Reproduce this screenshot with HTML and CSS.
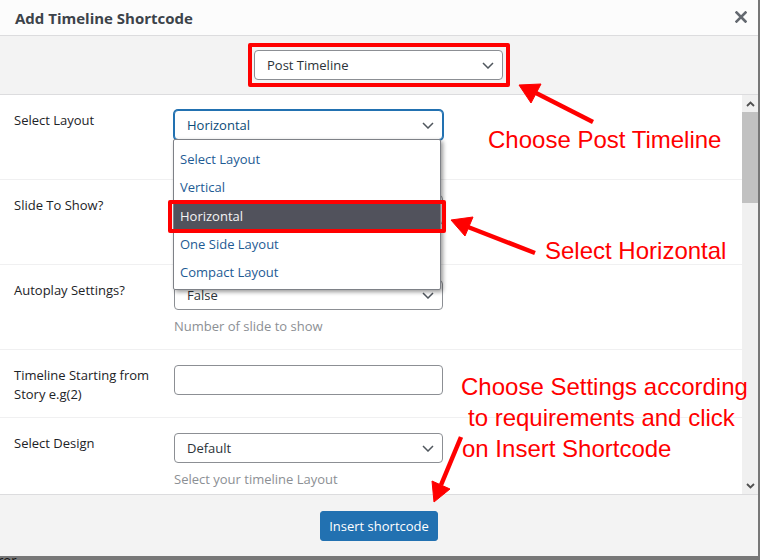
FILE: index.html
```html
<!DOCTYPE html>
<html>
  <head>
    <link rel="stylesheet" href="styles.css">
  </head>
  <body>
    <div class="modal">
      <div class="modal-head">
        <h1>Add Timeline Shortcode</h1>
        <svg class="close" width="12" height="12" viewBox="0 0 12 12">
          <path d="M1.5 1.5l9 9M10.5 1.5l-9 9" stroke="#646970" stroke-width="2.6" stroke-linecap="square"/>
        </svg>
      </div>

      <div class="type-bar">
        <div class="mark-box">
          <div class="select select-type">
            Post Timeline
            <svg class="chev" width="12" height="7" viewBox="0 0 12 7"><path d="M1 1l5 5 5-5" fill="none" stroke="#50575e" stroke-width="1.5"/></svg>
          </div>
        </div>
      </div>

      <div class="modal-body">
        <div class="fields">
          <div class="row">
            <label>Select Layout</label>
            <div class="field">
              <div class="select focus">
                Horizontal
                <svg class="chev" width="12" height="7" viewBox="0 0 12 7"><path d="M1 1l5 5 5-5" fill="none" stroke="#50575e" stroke-width="1.5"/></svg>
              </div>
              <p class="desc covered">Select your layout</p>
            </div>
          </div>
          <div class="row">
            <label>Slide To Show?</label>
            <div class="field">
              <div class="select">
                <span class="covered">3</span>
                <svg class="chev" width="12" height="7" viewBox="0 0 12 7"><path d="M1 1l5 5 5-5" fill="none" stroke="#50575e" stroke-width="1.5"/></svg>
              </div>
              <p class="desc covered">Number of slide to show</p>
            </div>
          </div>
          <div class="row">
            <label>Autoplay Settings?</label>
            <div class="field">
              <div class="select">
                False
                <svg class="chev" width="12" height="7" viewBox="0 0 12 7"><path d="M1 1l5 5 5-5" fill="none" stroke="#50575e" stroke-width="1.5"/></svg>
              </div>
              <p class="desc">Number of slide to show</p>
            </div>
          </div>
          <div class="row row-input">
            <label>Timeline Starting from Story e.g(2)</label>
            <div class="field">
              <div class="input"></div>
            </div>
          </div>
          <div class="row">
            <label>Select Design</label>
            <div class="field">
              <div class="select">
                Default
                <svg class="chev" width="12" height="7" viewBox="0 0 12 7"><path d="M1 1l5 5 5-5" fill="none" stroke="#50575e" stroke-width="1.5"/></svg>
              </div>
              <p class="desc">Select your timeline Layout</p>
            </div>
          </div>

          <ul class="dropdown">
            <li>Select Layout</li>
            <li>Vertical</li>
            <li class="active">Horizontal<span class="mark"></span></li>
            <li>One Side Layout</li>
            <li>Compact Layout</li>
          </ul>
        </div>

        <div class="scrollbar">
          <div class="sb-btn">
            <svg width="9" height="6" viewBox="0 0 9 6"><path d="M1 5l3.5-3.5L8 5" fill="none" stroke="#505050" stroke-width="1.8"/></svg>
          </div>
          <div class="thumb"></div>
          <div class="track"></div>
          <div class="sb-btn">
            <svg width="9" height="6" viewBox="0 0 9 6"><path d="M1 1l3.5 3.5L8 1" fill="none" stroke="#505050" stroke-width="1.8"/></svg>
          </div>
        </div>
      </div>

      <div class="modal-foot">
        <button class="btn-primary">Insert shortcode</button>
      </div>
    </div>
    <div class="underlay">ror</div>

    <!-- annotations -->
    <svg class="arrows" width="760" height="560" viewBox="0 0 760 560">
      <g fill="#f00" stroke="#f00">
        <line x1="593" y1="122" x2="536" y2="93" stroke-width="4.5"/>
        <polygon points="519,85 541,84 531,103" stroke-width="1"/>
        <line x1="535" y1="253" x2="468" y2="227" stroke-width="4.5"/>
        <polygon points="451,220 473,217 465,236" stroke-width="1"/>
        <line x1="461" y1="437" x2="441" y2="485" stroke-width="4.5"/>
        <polygon points="434,502 450,489 432,481" stroke-width="1"/>
      </g>
    </svg>
    <div class="note note-post">Choose Post Timeline</div>
    <div class="note note-horiz">Select Horizontal</div>
    <div class="note note-settings">
      <div>Choose Settings according</div>
      <div class="l2">to requirements and click</div>
      <div class="l3">on Insert Shortcode</div>
    </div>
  </body>
</html>
```

FILE: styles.css
```css
* {
  box-sizing: border-box;
}
body {
  margin: 0;
  width: 760px;
  height: 560px;
  overflow: hidden;
  position: relative;
  background: #777777;
  font-family: "Open Sans", "Noto Sans", sans-serif;
  font-size: 13px;
  color: #1d2327;
}
.modal {
  width: 758px;
  height: 556px;
  background: #fff;
  display: flex;
  flex-direction: column;
}
.modal-head {
  height: 36px;
  background: #fcfcfc;
  border-bottom: 1px solid #dcdcde;
  display: flex;
  align-items: center;
  justify-content: space-between;
  padding: 0 11px 0 15px;
}
.modal-head h1 {
  margin: 0;
  font-size: 15px;
  font-weight: 700;
  color: #3c434a;
}
.close {
  margin-top: -1px;
}
.type-bar {
  height: 59px;
  background: #f3f3f3;
  border-bottom: 1px solid #dcdcde;
  display: flex;
  justify-content: center;
  align-items: flex-start;
  padding-top: 7px;
}
.mark-box {
  border: 4px solid #ff0000;
  border-radius: 2px;
  padding: 3px 3px 3px 2px;
}
.select {
  position: relative;
  height: 30px;
  background: #fff;
  border: 1px solid #8c8f94;
  border-radius: 4px;
  padding: 0 30px 0 12px;
  display: flex;
  align-items: center;
  color: #2c3338;
}
.select-type {
  width: 249px;
}
.select.focus {
  border-color: #2271b1;
  box-shadow: 0 0 0 1px #2271b1;
  color: #0a4b78;
}
.chev {
  position: absolute;
  right: 8px;
  top: 11px;
}
.modal-body {
  height: 399px;
  display: flex;
  overflow: hidden;
}
.fields {
  position: relative;
  flex: 1;
}
.row {
  display: grid;
  grid-template-columns: 160px 269px;
  padding: 15px 0 14px 14px;
  border-bottom: 1px solid #f0f0f1;
}
.row-input {
  padding-bottom: 13px;
}
.row label {
  padding-top: 1px;
  line-height: 19px;
  padding-right: 12px;
}
.desc {
  margin: 7px 0 0;
  line-height: 18px;
  color: #8c8f94;
}
/* text that sits under the open dropdown */
.covered {
  visibility: hidden;
}
.input {
  height: 30px;
  border: 1px solid #8c8f94;
  border-radius: 4px;
  background: #fff;
}
.dropdown {
  position: absolute;
  top: 44px;
  left: 173px;
  width: 268px;
  height: 151px;
  margin: 0;
  padding: 5px 0;
  list-style: none;
  background: #fff;
  border: 1px solid #7e8187;
  border-radius: 2px;
  box-shadow: 2px 2px 4px rgba(0, 0, 0, 0.4);
}
.dropdown li {
  position: relative;
  height: 28.3px;
  line-height: 28px;
  padding-left: 6px;
  color: #1e5b94;
}
.dropdown li.active {
  height: 28px;
  background: #51525c;
  color: #f4f4f4;
  border-bottom: 1px solid #fff;
}
.mark {
  position: absolute;
  top: -2px;
  left: -6px;
  right: -6px;
  bottom: -4px;
  border: 4px solid #ff0000;
  border-radius: 2px;
}
.scrollbar {
  width: 16px;
  background: #f0f0f0;
  display: flex;
  flex-direction: column;
}
.sb-btn {
  height: 17px;
  display: flex;
  align-items: center;
  justify-content: center;
}
.thumb {
  height: 91px;
  background: #c1c1c1;
}
.track {
  flex: 1;
}
.modal-foot {
  height: 62px;
  background: #f3f3f3;
  border-top: 1px solid #dcdcde;
  display: flex;
  justify-content: center;
  padding-top: 16px;
}
.btn-primary {
  width: 118px;
  height: 30px;
  background: #2271b1;
  border: 1px solid #2271b1;
  border-radius: 3px;
  color: #fff;
  font-family: "Open Sans", "Noto Sans", sans-serif;
  font-size: 13px;
  padding: 0;
}
.underlay {
  height: 4px;
  overflow: hidden;
  font-size: 13px;
  line-height: 9px;
  color: #111;
  margin-left: -2px;
}
.arrows {
  position: absolute;
  top: 0;
  left: 0;
}
.note {
  position: absolute;
  font-family: "Liberation Sans", Arial, sans-serif;
  font-size: 24px;
  line-height: 31px;
  color: #ff0000;
  white-space: nowrap;
  text-shadow: 0 0 2px #fff, 0 0 1px #fff;
}
.note-post {
  left: 488px;
  top: 124px;
}
.note-horiz {
  left: 545px;
  top: 235px;
}
.note-settings {
  left: 461px;
  top: 371px;
}
.note-settings .l2 {
  margin-left: 7px;
}
.note-settings .l3 {
  margin-left: 1px;
}
```
